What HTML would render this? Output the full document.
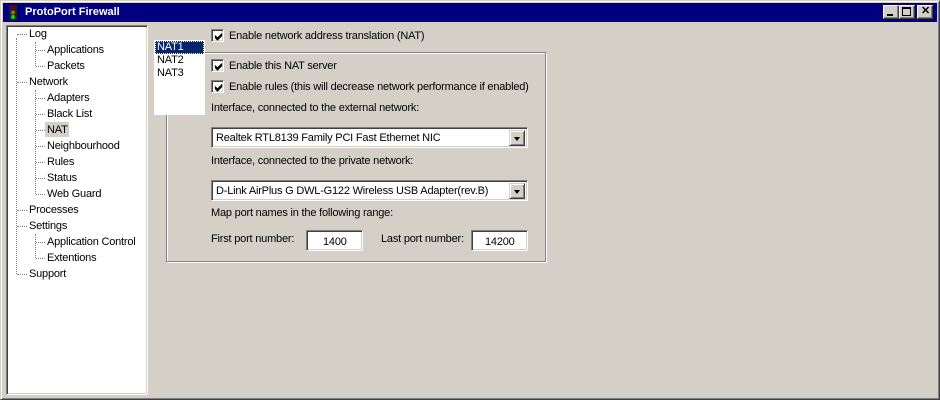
<!DOCTYPE html>
<html><head><meta charset="utf-8"><style>
*{margin:0;padding:0;box-sizing:border-box}
body{width:940px;height:400px;background:#d4d0c8;font-family:"Liberation Sans",Arial,sans-serif;font-size:11px;color:#000;position:relative;overflow:hidden}
.a{position:absolute;white-space:nowrap}
span.a{line-height:16px;letter-spacing:-0.2px}
.win{position:absolute;left:0;top:0;width:940px;height:400px;border:1px solid;border-color:#d4d0c8 #404040 #404040 #d4d0c8;box-shadow:inset 1px 1px 0 #fff,inset -1px -1px 0 #808080}
.title{position:absolute;left:3px;top:3px;width:934px;height:19px;background:#000080;color:#fff;font-weight:bold;font-size:11px}
.title span.a{line-height:13px;letter-spacing:0}
.tb{position:absolute;top:2px;width:16px;height:14px;background:#d4d0c8;border:1px solid;border-color:#fff #404040 #404040 #fff;box-shadow:inset -1px -1px 0 #808080}
.sunk{position:absolute;background:#fff;border:1px solid;border-color:#808080 #fff #fff #808080;box-shadow:inset 1px 1px 0 #404040,inset -1px -1px 0 #d4d0c8}
.cb{position:absolute;width:13px;height:13px;background:#fff;border:1px solid;border-color:#808080 #fff #fff #808080;box-shadow:inset 1px 1px 0 #404040,inset -1px -1px 0 #d4d0c8}
.cb svg{position:absolute;left:2px;top:2px}
.dv{position:absolute;border-left:1px dotted #808080;width:0}
.dh{position:absolute;border-top:1px dotted #808080;height:0}
.arrow{position:absolute;right:2px;top:2px;width:16px;height:16px;background:#d4d0c8;border:1px solid;border-color:#d4d0c8 #404040 #404040 #d4d0c8;box-shadow:inset 1px 1px 0 #fff,inset -1px -1px 0 #808080}
.arrow:after{content:"";position:absolute;left:4px;top:6px;border-left:3.5px solid transparent;border-right:3.5px solid transparent;border-top:4px solid #000}
</style></head><body>
<div class="win"></div>
<div class="title">
 <svg class="a" style="left:2px;top:1px" width="16" height="17"><rect x="4" y="1" width="8" height="15" fill="#202020"/><circle cx="8" cy="4" r="2" fill="#800000"/><circle cx="8" cy="8.5" r="2" fill="#808000"/><circle cx="8" cy="13" r="2" fill="#00e000"/></svg>
 <span class="a" style="left:22px;top:3px">ProtoPort Firewall</span>
 <div class="tb" style="left:880px"><div class="a" style="left:3px;top:8px;width:6px;height:2px;background:#000"></div></div>
 <div class="tb" style="left:896px"><div class="a" style="left:2px;top:1px;width:9px;height:9px;border:1px solid #000;border-top-width:2px"></div></div>
 <div class="tb" style="left:914px"><span class="a" style="left:3px;top:-1px;font-weight:bold;font-size:11px;color:#000">✕</span></div>
</div>

<div class="sunk" style="left:6px;top:25px;width:142px;height:370px"></div>
<div class="dv" style="left:16px;top:38px;height:236px"></div>
<div class="dv" style="left:35px;top:42px;height:24px"></div>
<div class="dv" style="left:35px;top:90px;height:104px"></div>
<div class="dv" style="left:35px;top:234px;height:24px"></div>
<div class="dh" style="left:17px;top:34px;width:10px"></div>
<div class="dh" style="left:17px;top:82px;width:10px"></div>
<div class="dh" style="left:17px;top:210px;width:10px"></div>
<div class="dh" style="left:17px;top:226px;width:10px"></div>
<div class="dh" style="left:17px;top:274px;width:10px"></div>
<div class="dh" style="left:36px;top:50px;width:9px"></div>
<div class="dh" style="left:36px;top:66px;width:9px"></div>
<div class="dh" style="left:36px;top:98px;width:9px"></div>
<div class="dh" style="left:36px;top:114px;width:9px"></div>
<div class="dh" style="left:36px;top:130px;width:9px"></div>
<div class="dh" style="left:36px;top:146px;width:9px"></div>
<div class="dh" style="left:36px;top:162px;width:9px"></div>
<div class="dh" style="left:36px;top:178px;width:9px"></div>
<div class="dh" style="left:36px;top:194px;width:9px"></div>
<div class="dh" style="left:36px;top:242px;width:9px"></div>
<div class="dh" style="left:36px;top:258px;width:9px"></div>
<span class="a" style="left:29px;top:26px">Log</span>
<span class="a" style="left:47px;top:42px">Applications</span>
<span class="a" style="left:47px;top:58px">Packets</span>
<span class="a" style="left:29px;top:74px">Network</span>
<span class="a" style="left:47px;top:90px">Adapters</span>
<span class="a" style="left:47px;top:106px">Black List</span>
<div class="a" style="left:45px;top:122px;width:24px;height:15px;background:#d4d0c8"></div>
<span class="a" style="left:47px;top:122px">NAT</span>
<span class="a" style="left:47px;top:138px">Neighbourhood</span>
<span class="a" style="left:47px;top:154px">Rules</span>
<span class="a" style="left:47px;top:170px">Status</span>
<span class="a" style="left:47px;top:186px">Web Guard</span>
<span class="a" style="left:29px;top:202px">Processes</span>
<span class="a" style="left:29px;top:218px">Settings</span>
<span class="a" style="left:47px;top:234px">Application Control</span>
<span class="a" style="left:47px;top:250px">Extentions</span>
<span class="a" style="left:29px;top:266px">Support</span>

<div class="a" style="left:166px;top:52px;width:380px;height:210px;border:1px solid #808080;box-shadow:1px 1px 0 #fff,inset 1px 1px 0 #fff"></div>

<div class="a" style="left:154px;top:40px;width:51px;height:75px;background:#fff"></div>
<div class="a" style="left:155px;top:41px;width:49px;height:13px;background:#0a246a;outline:1px dotted #fff;outline-offset:-1px"></div>
<span class="a" style="left:157px;top:39px;color:#fff">NAT1</span>
<span class="a" style="left:157px;top:52px">NAT2</span>
<span class="a" style="left:157px;top:65px">NAT3</span>

<div class="cb" style="left:211px;top:29px"><svg width="9" height="9"><path d="M1 3.5 L3.5 6 L8 1.5 M1 4.5 L3.5 7 L8 2.5 M1 5.5 L3.5 8 L8 3.5" stroke="#000" fill="none"/></svg></div>
<span class="a" style="left:229px;top:28px">Enable network address translation (NAT)</span>
<div class="cb" style="left:211px;top:59px"><svg width="9" height="9"><path d="M1 3.5 L3.5 6 L8 1.5 M1 4.5 L3.5 7 L8 2.5 M1 5.5 L3.5 8 L8 3.5" stroke="#000" fill="none"/></svg></div>
<span class="a" style="left:229px;top:58px">Enable this NAT server</span>
<div class="cb" style="left:211px;top:80px"><svg width="9" height="9"><path d="M1 3.5 L3.5 6 L8 1.5 M1 4.5 L3.5 7 L8 2.5 M1 5.5 L3.5 8 L8 3.5" stroke="#000" fill="none"/></svg></div>
<span class="a" style="left:229px;top:79px">Enable rules (this will decrease network performance if enabled)</span>
<span class="a" style="left:211px;top:100px">Interface, connected to the external network:</span>
<div class="sunk" style="left:211px;top:127px;width:317px;height:21px"><span class="a" style="left:4px;top:2px">Realtek RTL8139 Family PCI Fast Ethernet NIC</span><div class="arrow"></div></div>
<span class="a" style="left:211px;top:153px">Interface, connected to the private network:</span>
<div class="sunk" style="left:211px;top:180px;width:317px;height:21px"><span class="a" style="left:4px;top:2px">D-Link AirPlus G DWL-G122 Wireless USB Adapter(rev.B)</span><div class="arrow"></div></div>
<span class="a" style="left:211px;top:205px">Map port names in the following range:</span>
<span class="a" style="left:211px;top:231px">First port number:</span>
<div class="sunk" style="left:306px;top:230px;width:57px;height:21px"><span class="a" style="left:16px;top:3px">1400</span></div>
<span class="a" style="left:381px;top:231px">Last port number:</span>
<div class="sunk" style="left:471px;top:230px;width:57px;height:21px"><span class="a" style="left:13px;top:3px">14200</span></div>
</body></html>
